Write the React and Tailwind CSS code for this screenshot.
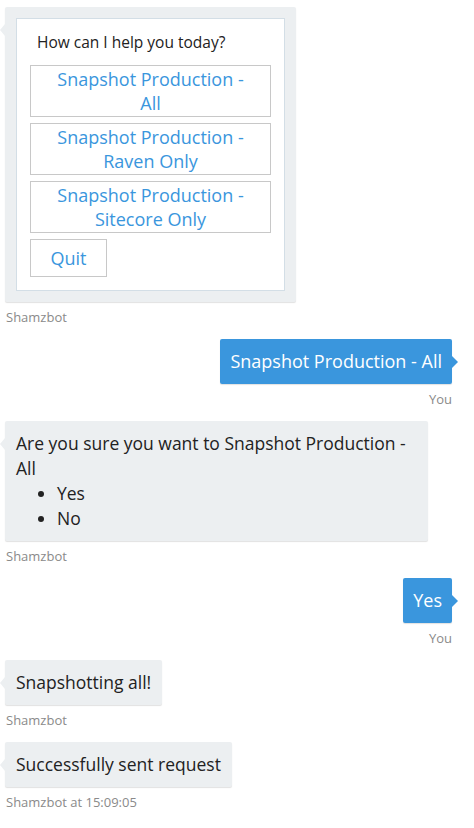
import React from "react";

const font = { fontFamily: '"Open Sans", "Noto Sans", sans-serif' };

const Notch = ({ side }) =>
  side === "left" ? (
    <svg
      className="absolute left-[-5px] top-[17px]"
      width="5"
      height="12"
      viewBox="0 0 5 12"
    >
      <path d="M5 0 L0 6 L5 12 Z" fill="#eceff1" />
    </svg>
  ) : (
    <svg
      className="absolute right-[-6px] top-[17px]"
      width="6"
      height="12"
      viewBox="0 0 6 12"
    >
      <path d="M0 0 L6 6 L0 12 Z" fill="#3a96dd" />
    </svg>
  );

const BotMessage = ({ children, label, className = "" }) => (
  <div className="flex flex-col items-start">
    <div
      className={`relative rounded-[2px] bg-[#eceff1] shadow-[0_1px_1px_rgba(0,0,0,0.12)] ${className}`}
    >
      <Notch side="left" />
      {children}
    </div>
    <div className="mt-[6px] pl-[1px] text-[13px] leading-[18px] text-[#8a8a8a]">
      {label}
    </div>
  </div>
);

const UserMessage = ({ text }) => (
  <div className="flex flex-col items-end">
    <div className="relative rounded-[2px] bg-[#3a96dd] px-[10px] py-[10px] text-[18px] leading-[25px] text-white shadow-[0_1px_1px_rgba(0,0,0,0.12)]">
      <Notch side="right" />
      {text}
    </div>
    <div className="mt-[6px] text-[13px] leading-[18px] text-[#8a8a8a]">
      You
    </div>
  </div>
);

const CardButton = ({ lines }) => (
  <button className="w-full border border-[#c8c8c8] bg-white py-[1px] text-center text-[18px] leading-[24px] text-[#3a96dd]">
    {lines.map((l, i) => (
      <div key={i}>{l}</div>
    ))}
  </button>
);

const choices = [
  ["Snapshot Production -", "All"],
  ["Snapshot Production -", "Raven Only"],
  ["Snapshot Production -", "Sitecore Only"],
];

export default function App() {
  return (
    <div
      className="min-h-[828px] w-[474px] bg-white pl-[5px] pr-[22px] pt-[7px]"
      style={font}
    >
      <div className="flex flex-col gap-[13px]">
        <BotMessage label="Shamzbot" className="w-[291px] p-[11px]">
          <div className="border border-[#d3dee6] bg-white px-[13px] pt-[11px] pb-[13px]">
            <div className="pl-[7px] text-[15.5px] leading-[24px] text-[#222]">
              How can I help you today?
            </div>
            <div className="mt-[11px] flex flex-col gap-[6px]">
              {choices.map((c, i) => (
                <CardButton key={i} lines={c} />
              ))}
              <button className="h-[38px] w-[77px] border border-[#c8c8c8] bg-white text-[18px] leading-[24px] text-[#3a96dd]">
                Quit
              </button>
            </div>
          </div>
        </BotMessage>

        <UserMessage text="Snapshot Production - All" />

        <BotMessage
          label="Shamzbot"
          className="w-[423px] px-[11px] pt-[10px] pb-[10px] text-[17.5px] leading-[25px] text-[#222]"
        >
          <div>Are you sure you want to Snapshot Production - All</div>
          <ul className="list-disc pl-[41px]">
            <li>Yes</li>
            <li>No</li>
          </ul>
        </BotMessage>

        <UserMessage text="Yes" />

        <BotMessage
          label="Shamzbot"
          className="px-[11px] py-[10px] text-[17.5px] leading-[25px] text-[#222]"
        >
          Snapshotting all!
        </BotMessage>

        <BotMessage
          label="Shamzbot at 15:09:05"
          className="px-[11px] py-[10px] text-[17.5px] leading-[25px] text-[#222]"
        >
          Successfully sent request
        </BotMessage>
      </div>
    </div>
  );
}
